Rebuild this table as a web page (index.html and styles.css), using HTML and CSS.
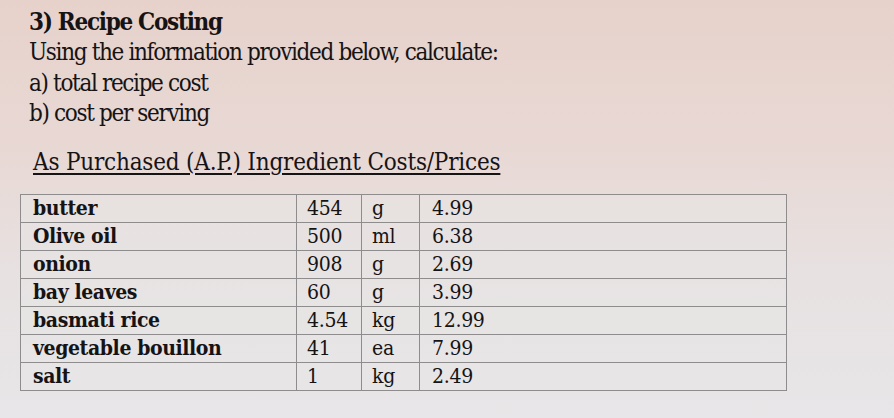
FILE: index.html
```html
<!DOCTYPE html>
<html>
<head>
<meta charset="utf-8">
<link rel="stylesheet" href="styles.css">
</head>
<body>
<div class="page">
  <div class="intro">
    <div class="title">3) Recipe Costing</div>
    <div class="line">Using the information provided below, calculate:</div>
    <div class="line">a) total recipe cost</div>
    <div class="line">b) cost per serving</div>
  </div>
  <div class="subhead">As Purchased (A.P.) Ingredient Costs/Prices</div>
  <table class="costs">
    <tr><td class="name">butter</td><td class="qty">454</td><td class="unit">g</td><td class="price">4.99</td></tr>
    <tr><td class="name">Olive oil</td><td class="qty">500</td><td class="unit">ml</td><td class="price">6.38</td></tr>
    <tr><td class="name">onion</td><td class="qty">908</td><td class="unit">g</td><td class="price">2.69</td></tr>
    <tr><td class="name">bay leaves</td><td class="qty">60</td><td class="unit">g</td><td class="price">3.99</td></tr>
    <tr><td class="name">basmati rice</td><td class="qty">4.54</td><td class="unit">kg</td><td class="price">12.99</td></tr>
    <tr><td class="name">vegetable bouillon</td><td class="qty">41</td><td class="unit">ea</td><td class="price">7.99</td></tr>
    <tr><td class="name">salt</td><td class="qty">1</td><td class="unit">kg</td><td class="price">2.49</td></tr>
  </table>
</div>
</body>
</html>
```
FILE: styles.css
```css
html, body {
  margin: 0;
  padding: 0;
}
body {
  width: 894px;
  height: 418px;
  overflow: hidden;
  background: linear-gradient(180deg, #e7d2cb 0%, #e8d8d4 35%, #e7e1e1 65%, #e8e6e8 100%);
  font-family: "DejaVu Serif Condensed", "DejaVu Serif", "Liberation Serif", serif;
  color: #161315;
}
.page {
  padding: 7px 0 0 29px;
}
.intro {
  display: flex;
  flex-direction: column;
}
.title {
  font-weight: bold;
  font-size: 24px;
  line-height: 30px;
  letter-spacing: -1.3px;
}
.line {
  font-size: 24px;
  line-height: 30.5px;
  letter-spacing: -1.35px;
}
.subhead {
  margin-top: 19px;
  margin-left: 4px;
  font-size: 24px;
  line-height: 28px;
  letter-spacing: -0.2px;
  text-decoration: underline;
  text-decoration-thickness: 1.5px;
  text-underline-offset: 3px;
}
.costs {
  margin: 18px 0 0 -9px;
  border-collapse: collapse;
  width: 767px;
  background: rgba(232, 230, 230, 0.5);
}
.costs td {
  border: 1.5px solid #8e8c8d;
  height: 27px;
  padding: 0 0 0 10px;
  font-size: 21px;
  line-height: 24px;
  vertical-align: middle;
  letter-spacing: -0.3px;
}
.costs td.name {
  width: 263px;
  padding-left: 12px;
  font-weight: bold;
  letter-spacing: -0.4px;
}
.costs td.qty {
  width: 54px;
}
.costs td.unit {
  width: 47px;
}
.costs td.price {
  padding-left: 12px;
}
```
